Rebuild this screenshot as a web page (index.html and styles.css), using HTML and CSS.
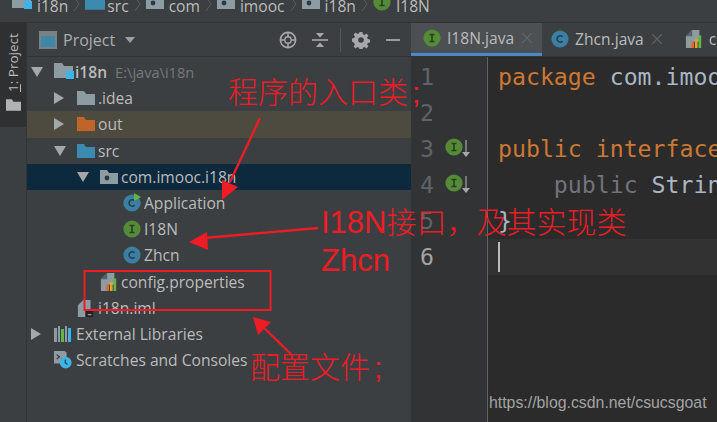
FILE: index.html
```html
<!DOCTYPE html>
<html lang="zh">
<head>
<meta charset="utf-8">
<title>I18N.java</title>
<link rel="stylesheet" href="styles.css">
</head>
<body>
<svg class="defs" width="0" height="0" aria-hidden="true">
  <symbol id="folder" viewBox="0 0 18 14"><path d="M0 0h7l2 3h9v11H0z"/></symbol>
  <symbol id="module" viewBox="0 0 20 18"><path fill="#8d9ba3" d="M0 0h8l2 3h9v12H0z"/><rect x="12" y="8" width="8" height="8" fill="#3cb4e7"/></symbol>
  <symbol id="package" viewBox="0 0 18 14"><path fill="#8d9ba3" d="M0 0h7l2 3h9v11H0z"/><circle cx="7" cy="8" r="2.4" fill="#2b3a44"/></symbol>
  <symbol id="cls" viewBox="0 0 18 18"><circle cx="9" cy="9" r="8.6" fill="#3d7fa3"/><path d="M11.6 6.8A3.2 3.2 0 1 0 11.6 11.2" fill="none" stroke="#1f3f52" stroke-width="1.6"/></symbol>
  <symbol id="iface" viewBox="0 0 18 18"><circle cx="9" cy="9" r="8.6" fill="#548a38"/><path d="M6.5 5.5h5M6.5 12.5h5M9 5.5v7" fill="none" stroke="#26401a" stroke-width="1.6"/></symbol>
  <symbol id="props" viewBox="0 0 18 20"><path fill="#8d9ba3" d="M0 7L7 0h8v13H8v7H0z"/><path fill="#5b6166" d="M7 0v7H0z"/><rect x="6" y="13" width="3" height="7" fill="#e4662b"/><rect x="10" y="10" width="3" height="10" fill="#e0a42a"/><rect x="14" y="6" width="3" height="14" fill="#62b543"/></symbol>
  <symbol id="iml" viewBox="0 0 18 20"><path fill="#8d9ba3" d="M0 7L6 1h8v12H8v7H0z"/><rect x="9" y="12" width="8" height="8" fill="#222"/><rect x="11" y="17" width="4" height="1" fill="#ccc"/></symbol>
  <symbol id="libs" viewBox="0 0 18 16"><rect x="0" y="2" width="3" height="14" fill="#8d9ba3"/><rect x="4" y="0" width="2" height="16" fill="#8d9ba3"/><rect x="7" y="3" width="3" height="13" fill="#62b543"/><rect x="11" y="0" width="2" height="16" fill="#8d9ba3"/><rect x="14" y="2" width="3" height="14" fill="#3cb4e7"/></symbol>
  <symbol id="scratch" viewBox="0 0 20 20"><path fill="#8d9ba3" d="M0 0h12l2 2v6h-6v6H0z"/><path d="M3 4l3 2.5L3 9" fill="none" stroke="#2b2d2e" stroke-width="1.2"/><circle cx="13" cy="13" r="6.5" fill="#3cb4e7"/><path d="M12.5 9.5v3.5l2.5 2" fill="none" stroke="#1d3d4d" stroke-width="1.3"/></symbol>
  <symbol id="chev" viewBox="0 0 7 14"><path d="M1 0l5 7-5 7" fill="none" stroke="#5a5d5f" stroke-width="1"/></symbol>
  <symbol id="right" viewBox="0 0 10 12" preserveAspectRatio="xMinYMid meet"><path d="M0 0l10 6-10 6z" fill="#a5a8aa"/></symbol>
  <symbol id="down" viewBox="0 0 12 10" preserveAspectRatio="xMinYMid meet"><path d="M0 0h12L6 10z" fill="#a5a8aa"/></symbol>
  <symbol id="x" viewBox="0 0 10 10"><path d="M0 0l10 10M10 0L0 10" stroke="#62666a" stroke-width="1.2"/></symbol>
</svg>

<div class="app">
  <nav class="crumbs">
    <svg class="cr-i w20"><use href="#module"/></svg><span class="cr-t">i18n</span><svg class="chev"><use href="#chev"/></svg>
    <svg class="cr-i w20 blue"><use href="#folder"/></svg><span class="cr-t cr-tight">src</span><svg class="chev"><use href="#chev"/></svg>
    <svg class="cr-i w18"><use href="#package"/></svg><span class="cr-t">com</span><svg class="chev"><use href="#chev"/></svg>
    <svg class="cr-i w18"><use href="#package"/></svg><span class="cr-t">imooc</span><svg class="chev"><use href="#chev"/></svg>
    <svg class="cr-i w18"><use href="#package"/></svg><span class="cr-t">i18n</span><svg class="chev"><use href="#chev"/></svg>
    <svg class="cr-i w18"><use href="#iface"/></svg><span class="cr-t">I18N</span>
  </nav>

  <div class="main">
    <aside class="strip">
      <div class="strip-btn">
        <span class="strip-label"><u>1</u>: Project</span>
        <svg class="strip-folder"><use href="#folder"/></svg>
      </div>
    </aside>

    <section class="panel">
      <header class="panel-head">
        <svg class="proj-icon" viewBox="0 0 18 18"><rect width="18" height="18" fill="#7b8084"/><rect x="2" y="5" width="14" height="11" fill="#3f87a8"/></svg>
        <span class="panel-title">Project</span>
        <svg class="panel-caret" viewBox="0 0 12 7"><path d="M0 0h12L6 7z" fill="#9da0a2"/></svg>
        <div class="tools">
          <svg class="tool" viewBox="0 0 18 18"><circle cx="9" cy="9" r="7.6" fill="none" stroke="#a6a8aa" stroke-width="1.6"/><circle cx="9" cy="9" r="3.2" fill="none" stroke="#a6a8aa" stroke-width="1.4"/><path d="M9 1v5M9 12v5M1 9h5M12 9h5" stroke="#a6a8aa" stroke-width="1.6"/></svg>
          <svg class="tool" viewBox="0 0 18 18"><path d="M1 9h16" stroke="#a6a8aa" stroke-width="1.6"/><path d="M5 2h8L9 6.5zM5 16h8L9 11.5z" fill="#a6a8aa"/></svg>
          <span class="tool-sep"></span>
          <svg class="tool" viewBox="0 0 18 18"><path fill="#a6a8aa" fill-rule="evenodd" d="M7.5 1h3l.4 2.2 1.6.7 1.9-1.3 2 2-1.3 1.9.7 1.6 2.2.4v3l-2.2.4-.7 1.6 1.3 1.9-2 2-1.9-1.3-1.6.7-.4 2.2h-3l-.4-2.2-1.6-.7-1.9 1.3-2-2 1.3-1.9-.7-1.6L0 10.5v-3l2.2-.4.7-1.6-1.3-1.9 2-2 1.9 1.3 1.6-.7zM9 6.2a2.8 2.8 0 1 0 0 5.6 2.8 2.8 0 0 0 0-5.6z"/></svg>
          <svg class="tool" viewBox="0 0 18 18"><path d="M2 9h14" stroke="#a6a8aa" stroke-width="1.8"/></svg>
        </div>
      </header>

      <div class="tree">
        <div class="row lv0"><svg class="arrow"><use href="#down"/></svg><svg class="ico ico-module"><use href="#module"/></svg><b class="root">i18n</b><span class="path">E:\java\i18n</span></div>
        <div class="row lv1"><svg class="arrow arrow-r"><use href="#right"/></svg><svg class="ico f-grey"><use href="#folder"/></svg><span>.idea</span></div>
        <div class="row lv1 excluded"><svg class="arrow arrow-r"><use href="#right"/></svg><svg class="ico f-orange"><use href="#folder"/></svg><span>out</span></div>
        <div class="row lv1"><svg class="arrow"><use href="#down"/></svg><svg class="ico f-blue"><use href="#folder"/></svg><span>src</span></div>
        <div class="row lv2 selected"><svg class="arrow"><use href="#down"/></svg><svg class="ico"><use href="#package"/></svg><span>com.imooc.i18n</span></div>
        <div class="row lv3"><span class="arrow"></span><span class="ico-wrap"><svg class="ico"><use href="#cls"/></svg><svg class="run" viewBox="0 0 8 9"><path d="M0 0l8 4.5L0 9z" fill="#62b543"/></svg></span><span>Application</span></div>
        <div class="row lv3"><span class="arrow"></span><svg class="ico"><use href="#iface"/></svg><span>I18N</span></div>
        <div class="row lv3"><span class="arrow"></span><svg class="ico"><use href="#cls"/></svg><span>Zhcn</span></div>
        <div class="row lv2"><span class="arrow"></span><svg class="ico"><use href="#props"/></svg><span>config.properties</span></div>
        <div class="row lv1"><span class="arrow"></span><svg class="ico"><use href="#iml"/></svg><span>i18n.iml</span></div>
        <div class="row lv0"><svg class="arrow arrow-r"><use href="#right"/></svg><svg class="ico"><use href="#libs"/></svg><span>External Libraries</span></div>
        <div class="row lv0"><span class="arrow"></span><svg class="ico"><use href="#scratch"/></svg><span>Scratches and Consoles</span></div>
      </div>
    </section>

    <section class="editor">
      <div class="tabs">
        <div class="tab active"><svg class="tab-i"><use href="#iface"/></svg><span>I18N.java</span><svg class="tab-x"><use href="#x"/></svg></div>
        <div class="tab"><svg class="tab-i"><use href="#cls"/></svg><span>Zhcn.java</span><svg class="tab-x"><use href="#x"/></svg></div>
        <div class="tab"><svg class="tab-i"><use href="#props"/></svg><span>config.properties</span></div>
      </div>
      <div class="code-area">
        <div class="gutter">
          <div class="ln">1</div>
          <div class="ln">2</div>
          <div class="ln">3<span class="mark"><svg class="tab-i"><use href="#iface"/></svg><svg class="impl" viewBox="0 0 8 18"><path d="M4 0v13" stroke="#a6a8aa" stroke-width="1.2"/><path d="M0 12h8l-4 5z" fill="#a6a8aa"/></svg></span></div>
          <div class="ln">4<span class="mark"><svg class="tab-i"><use href="#iface"/></svg><svg class="impl" viewBox="0 0 8 18"><path d="M4 0v13" stroke="#a6a8aa" stroke-width="1.2"/><path d="M0 12h8l-4 5z" fill="#a6a8aa"/></svg></span></div>
          <div class="ln">5</div>
          <div class="ln ln-cur">6</div>
        </div>
        <div class="code">
          <div class="cl"><span class="kw">package</span> com.imooc.i18n;</div>
          <div class="cl"></div>
          <div class="cl"><span class="kw">public interface</span> I18N {</div>
          <div class="cl">    <span class="dim">public</span> String getTitle();</div>
          <div class="cl">}</div>
          <div class="cl cur"><span class="caret"></span></div>
        </div>
      </div>
    </section>
  </div>

  <svg class="marks" viewBox="0 0 717 422" width="717" height="422">
    <g fill="none" stroke="#ee1c25" stroke-width="2.4">
      <path d="M260 118L230 182"/>
      <path d="M318 228L204 238"/>
      <path d="M292 355L263 327"/>
      <rect x="84.500" y="271" width="186" height="39" stroke-width="2"/>
    </g>
    <g fill="#ee1c25">
      <path d="M222 200L222 180L238 187z"/>
      <path d="M189 242L207 232L208 250z"/>
      <path d="M253 317L271 322L258 335z"/>
    </g>
  </svg>
  <span class="note n1">程序的入口类<span class="semi">;</span></span>
  <span class="note n2"><span class="latin">I18N</span>接口，及其实现类</span>
  <span class="note n3"><span class="latin">Zhcn</span></span>
  <span class="note n4">配置文件<span class="semi">;</span></span>
  <span class="watermark">https://blog.csdn.net/csucsgoat</span>
</div>
</body>
</html>
```

FILE: styles.css
```css
* { box-sizing: border-box; }
html, body { margin: 0; padding: 0; background: #3c3f41; }
.defs { position: absolute; }
svg { display: block; flex: none; }

.app {
  position: relative;
  width: 717px;
  height: 422px;
  overflow: hidden;
  display: flex;
  flex-direction: column;
  font-family: "Open Sans", "Noto Sans", sans-serif;
  font-size: 15.6px;
  color: #bbbbbb;
}

/* breadcrumb */
.crumbs {
  flex: none;
  height: 23px;
  padding: 0 0 11px 12px;
  display: flex;
  align-items: flex-end;
  background: #3c3f41;
  border-bottom: 1px solid #2f3132;
  overflow: hidden;
  fill: #8d9ba3;
}
.cr-t { line-height: 16px; margin-left: 5px; height: 13px; flex: none; }
.cr-tight { margin-left: 2px; }
.cr-i { height: 18px; }
.w20 { width: 20px; }
.w18 { width: 18px; }
.blue { fill: #3d8ab0; }
.chev { width: 7px; height: 14px; margin: 0 5px; }

.main { flex: 1; display: flex; min-height: 0; }

/* left strip */
.strip {
  flex: none;
  width: 27px;
  background: #3c3f41;
  border-right: 1px solid #323436;
}
.strip-btn {
  height: 104px;
  background: #2e3031;
  display: flex;
  flex-direction: column;
  align-items: center;
  padding-top: 9px;
  gap: 7px;
}
.strip-label {
  writing-mode: vertical-rl;
  transform: rotate(180deg);
  font-size: 13.5px;
  line-height: 14px;
  height: 60px;
  color: #bbb;
  white-space: nowrap;
}
.strip-folder { width: 15px; height: 12px; fill: #b2b2b2; }

/* project panel */
.panel { flex: none; width: 384px; background: #3c3f41; display: flex; flex-direction: column; }
.panel-head {
  flex: none;
  height: 34px;
  padding: 0 9px 0 12px;
  display: flex;
  align-items: center;
  border-bottom: 1px solid #323436;
}
.proj-icon { width: 18px; height: 18px; }
.panel-title { margin-left: 6px; font-size: 16px; color: #a9adb0; }
.panel-caret { width: 10px; height: 6px; margin-left: 10px; }
.tools { margin-left: auto; display: flex; align-items: center; }
.tool { width: 18px; height: 18px; margin-left: 14px; }
.tool-sep { width: 1px; height: 24px; background: #55585a; margin: 0 0 0 11px; }
.tool-sep + .tool { margin-left: 11px; }

.tree { padding-top: 2px; }
.row { height: 26.2px; display: flex; align-items: center; white-space: nowrap; }
.lv0 { padding-left: 4px; }
.lv1 { padding-left: 27px; }
.lv2 { padding-left: 50px; }
.lv3 { padding-left: 73px; }
.arrow { width: 23px; height: 10px; flex: none; display: block; overflow: visible; }
.arrow-r { height: 12px; }
.ico, .ico-wrap { width: 18px; height: 18px; margin-right: 3px; flex: none; }
.ico-wrap { position: relative; display: block; }
.ico-wrap .ico { margin: 0; }
.lv0 .ico { margin-right: 4px; }
.lv0 .ico-module { width: 20px; margin-right: 1px; }
.run { position: absolute; left: 11px; top: -1px; width: 7px; height: 8px; }
.f-grey { fill: #8d9ba3; }
.f-orange { fill: #c0642a; }
.f-blue { fill: #3d8ab0; }
.excluded { background: #4d4a40; }
.selected { background: #0d293e; }
.root { font-weight: 600; }
.path { margin-left: 8px; font-size: 14.6px; color: #787878; }

/* editor */
.editor { flex: 1; min-width: 0; display: flex; flex-direction: column; background: #2b2b2b; }
.tabs { flex: none; height: 34px; display: flex; background: #3c3f41; border-bottom: 1px solid #323436; overflow: hidden; }
.tab { display: flex; align-items: center; padding: 0 10px 2px 12px; white-space: nowrap; color: #bbb; flex: none; }
.tab.active { background: #4c5053; border-bottom: 3px solid #4a88c7; padding-bottom: 0; }
.tab-i { width: 18px; height: 18px; }
.tab span { margin-left: 6px; }
.tab-x { width: 10px; height: 10px; margin-left: 8px; }
.tab + .tab { padding-left: 9px; padding-right: 14px; }

.code-area { flex: 1; display: flex; min-height: 0; font-family: "DejaVu Sans Mono", monospace; font-size: 23.2px; }
.gutter { flex: none; width: 77px; background: #313335; border-right: 1px solid #606366; padding-top: 1.500px; color: #606366; }
.ln { height: 36px; line-height: 36px; padding-left: 9px; position: relative; }
.ln-cur { color: #a4a3a3; }
.mark { position: absolute; left: 34px; top: 7px; display: flex; }
.impl { width: 8px; height: 18px; margin-left: -1px; margin-top: 2px; }
.code { flex: 1; min-width: 0; padding-top: 1.500px; overflow: hidden; color: #a9b7c6; }
.cl { height: 36px; line-height: 36px; padding-left: 10px; white-space: pre; }
.kw { color: #cc7832; }
.dim { color: #72737a; }
.cur { background: #323232; display: flex; align-items: center; }
.caret { width: 2px; height: 30px; background: #bbbbbb; }

/* annotations */
.marks { position: absolute; left: 0; top: 0; pointer-events: none; }
.note {
  position: absolute;
  font-family: "Liberation Sans", "Noto Sans CJK SC", sans-serif;
  font-size: 30px;
  line-height: 36px;
  font-weight: 300;
  color: #ee1c25;
  white-space: nowrap;
}
.latin { font-size: 31px; }
.semi { margin-left: 4px; }
.n1 { left: 228px; top: 75px; }
.n2 { left: 321px; top: 205px; }
.n3 { left: 321px; top: 243px; }
.n4 { left: 250px; top: 350px; }
.watermark {
  position: absolute;
  left: 489px;
  top: 394px;
  font-family: "Liberation Sans", sans-serif;
  font-size: 15.85px;
  line-height: 18px;
  color: #a3a3a3;
  white-space: nowrap;
}
```
